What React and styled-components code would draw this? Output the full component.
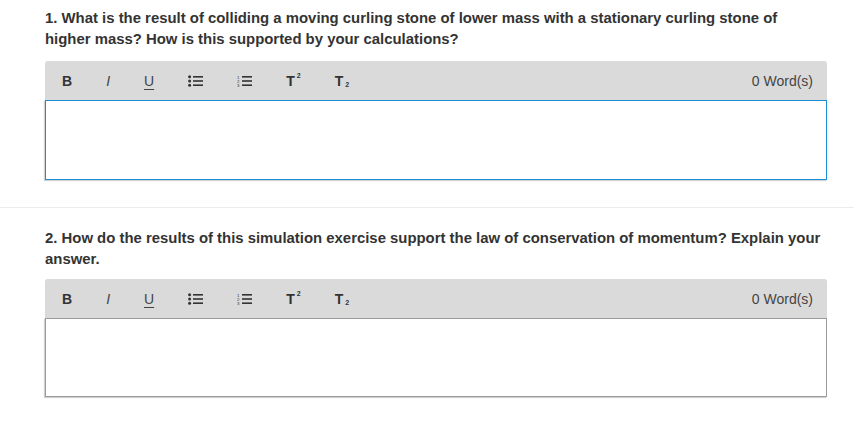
import styled, { createGlobalStyle } from "styled-components"

const Global = createGlobalStyle`
    body {
        margin: 0;
        background: #fff;
        font-family: "Liberation Sans", Arial, sans-serif;
    }
`
const Question = styled.section`
    padding: ${p => p.$top}px 27px ${p => p.$bottom}px 45px;
    border-bottom: ${p => p.$divider ? "1px solid #ececec" : "none"};
`
const Prompt = styled.p`
    margin: 0;
    padding-right: 4px;
    font-size: 14.9px;
    font-weight: 700;
    line-height: 21px;
    color: #333;
`
const Editor = styled.div`
    margin-top: ${p => p.$gap}px;
`
const Toolbar = styled.div`
    height: 39px;
    display: flex;
    align-items: center;
    background: #dadada;
    border-radius: 3px 3px 0 0;
    padding-right: 14px;
    color: #333;
`
const Tool = styled.span`
    display: flex;
    align-items: center;
    justify-content: center;
    padding: 0 17px;
    height: 100%;
`
const Bold = styled.b`
    font-weight: 700;
    font-size: 14px;
`
const Italic = styled.i`
    font-weight: 400;
    font-size: 14px;
    color: #444;
`
const Under = styled.span`
    font-size: 14px;
    color: #444;
    text-decoration: underline;
    text-underline-offset: 3px;
`
const Tee = styled.span`
    position: relative;
    font-weight: 700;
    font-size: 14px;
    color: #333;
    padding-right: 6px;
`
const Script = styled.span`
    position: absolute;
    right: 0;
    font-size: 7px;
    font-weight: 700;
    top: ${p => p.$sub ? "8px" : "-1px"};
`
const Count = styled.span`
    margin-left: auto;
    font-size: 14px;
    color: #444;
`
const Area = styled.div`
    height: ${p => p.$h}px;
    box-sizing: border-box;
    border: 1px solid ${p => p.$focus ? "#1d8fd8" : "#9a9a9a"};
    box-shadow: -1px 1px 1px rgba(0, 0, 0, 0.18);
    background: #fff;
`

const BulletIcon = () => (
    <svg width="15" height="12" viewBox="0 0 15 12">
        <circle cx="1.6" cy="1.8" r="1.5" fill="#333" />
        <circle cx="1.6" cy="6" r="1.5" fill="#333" />
        <circle cx="1.6" cy="10.2" r="1.5" fill="#333" />
        <rect x="5" y="1" width="10" height="1.6" fill="#333" />
        <rect x="5" y="5.2" width="10" height="1.6" fill="#333" />
        <rect x="5" y="9.4" width="10" height="1.6" fill="#333" />
    </svg>
)

const NumberIcon = () => (
    <svg width="15" height="12" viewBox="0 0 15 12">
        <text x="0" y="3.8" fontSize="4.4" fill="#333" fontFamily="Liberation Sans">1</text>
        <text x="0" y="7.9" fontSize="4.4" fill="#333" fontFamily="Liberation Sans">2</text>
        <text x="0" y="12" fontSize="4.4" fill="#333" fontFamily="Liberation Sans">3</text>
        <rect x="5" y="1" width="10" height="1.6" fill="#333" />
        <rect x="5" y="5.2" width="10" height="1.6" fill="#333" />
        <rect x="5" y="9.4" width="10" height="1.6" fill="#333" />
    </svg>
)

function RichEditor ({ gap, height, focus }) {
    return (
        <Editor $gap={gap}>
            <Toolbar>
                <Tool><Bold>B</Bold></Tool>
                <Tool><Italic>I</Italic></Tool>
                <Tool><Under>U</Under></Tool>
                <Tool><BulletIcon /></Tool>
                <Tool><NumberIcon /></Tool>
                <Tool><Tee>T<Script>2</Script></Tee></Tool>
                <Tool><Tee>T<Script $sub>2</Script></Tee></Tool>
                <Count>0 Word(s)</Count>
            </Toolbar>
            <Area $h={height} $focus={focus} />
        </Editor>
    )
}

export default function App () {
    return (
        <>
            <Global />
            <Question $top={8} $bottom={27} $divider>
                <Prompt>1. What is the result of colliding a moving curling stone of lower mass with a stationary curling stone of higher mass? How is this supported by your calculations?</Prompt>
                <RichEditor gap={11} height={80} focus />
            </Question>
            <Question $top={20} $bottom={20}>
                <Prompt>2. How do the results of this simulation exercise support the law of conservation of momentum? Explain your answer.</Prompt>
                <RichEditor gap={9} height={79} />
            </Question>
        </>
    )
}
